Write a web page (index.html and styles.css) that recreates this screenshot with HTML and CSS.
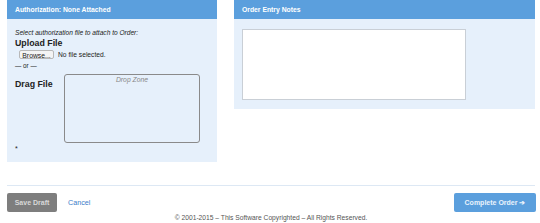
FILE: index.html
```html
<!DOCTYPE html>
<html lang="en">
<head>
    <meta charset="UTF-8">
    <meta name="viewport" content="width=device-width, initial-scale=1.0">
    <title>Order Entry</title>
    <link rel="stylesheet" href="styles.css">
</head>
<body>
    <div class="order-page">
        <div class="panels">
            <div class="panel panel-auth">
                <div class="panel-header">Authorization: None Attached</div>
                <div class="panel-body">
                    <div class="hint">Select authorization file to attach to Order:</div>
                    <div class="field-title">Upload File</div>
                    <div class="file-row">
                        <span class="browse-btn">Browse...</span>
                        <span class="file-status">No file selected.</span>
                    </div>
                    <div class="or-line">&mdash; or &mdash;</div>
                    <div class="drag-row">
                        <div class="field-title drag-label">Drag File</div>
                        <div class="drop-zone">Drop Zone</div>
                    </div>
                    <div class="required">*</div>
                </div>
            </div>
            <div class="panel panel-notes">
                <div class="panel-header">Order Entry Notes</div>
                <div class="panel-body">
                    <textarea class="notes"></textarea>
                </div>
            </div>
        </div>

        <div class="actions">
            <div class="actions-left">
                <button class="btn btn-draft">Save Draft</button>
                <a class="cancel-link" href="#">Cancel</a>
            </div>
            <button class="btn btn-complete">Complete Order <span class="arrow">&#x2794;</span></button>
        </div>
        <div class="copyright">&copy; 2001-2015 &ndash; This Software Copyrighted &ndash; All Rights Reserved.</div>
    </div>
</body>
</html>
```

FILE: styles.css
```css
body {
    margin: 0;
    background-color: #ffffff;
    font-family: "Liberation Sans", Arial, sans-serif;
    color: #222;
}

.order-page {
    width: 540px;
    height: 223px;
    padding: 0 5px 0 7px;
    box-sizing: border-box;
}

.panels {
    display: flex;
    align-items: flex-start;
    gap: 17px;
    height: 185px;
    border-bottom: 1px solid #dde8f4;
}

.panel {
    background-color: #e6f0fb;
}

.panel-auth {
    width: 210px;
    height: 162px;
}

.panel-notes {
    width: 301px;
    height: 109px;
}

.panel-header {
    height: 19px;
    line-height: 19px;
    padding-left: 8px;
    background-color: #5b9fdd;
    color: #ffffff;
    font-size: 6.8px;
    font-weight: bold;
}

.panel-auth .panel-body {
    padding: 10px 8px 0 8px;
}

.hint {
    font-size: 6.6px;
    font-style: italic;
    line-height: 8px;
}

.field-title {
    font-size: 8.8px;
    font-weight: bold;
    line-height: 11px;
    margin-top: 1px;
}

.file-row {
    display: flex;
    align-items: center;
    margin-left: 4px;
    height: 10px;
}

.browse-btn {
    display: inline-block;
    width: 35px;
    height: 9px;
    line-height: 9px;
    box-sizing: border-box;
    border: 1px solid #b8b8b8;
    border-radius: 2px;
    background-color: #f4f4f4;
    font-size: 6.8px;
    text-align: center;
}

.file-status {
    margin-left: 4px;
    font-size: 6.7px;
}

.or-line {
    font-size: 6.3px;
    line-height: 8px;
    margin-top: 3px;
}

.drag-row {
    display: flex;
    align-items: flex-start;
    margin-top: 4px;
}

.drag-label {
    width: 49px;
    margin-top: 5px;
}

.drop-zone {
    width: 136px;
    height: 69px;
    box-sizing: border-box;
    border: 1px solid #8a8a8a;
    border-radius: 3px;
    padding-top: 1px;
    text-align: center;
    font-size: 6.8px;
    font-style: italic;
    color: #888;
}

.required {
    font-size: 7px;
    margin-top: 2px;
}

.panel-notes .panel-body {
    padding: 10px 8px 0 8px;
}

.notes {
    display: block;
    width: 224px;
    height: 71px;
    box-sizing: border-box;
    margin: 0;
    border: 1px solid #c9cfd6;
    background-color: #ffffff;
    resize: none;
}

.actions {
    display: flex;
    justify-content: space-between;
    align-items: center;
    margin-top: 7px;
}

.actions-left {
    display: flex;
    align-items: center;
}

.btn {
    height: 19px;
    border: none;
    border-radius: 2px;
    font-family: "Liberation Sans", Arial, sans-serif;
    font-size: 7px;
    font-weight: bold;
    padding: 0;
}

.btn-draft {
    width: 50px;
    background-color: #7e7e7e;
    color: #d8d8d8;
}

.cancel-link {
    margin-left: 11px;
    font-size: 7.2px;
    color: #3b7cc9;
    text-decoration: none;
}

.btn-complete {
    width: 82px;
    margin-right: -1px;
    background-color: #5b9fdd;
    color: #eaf3fc;
}

.arrow {
    font-size: 7px;
}

.copyright {
    margin-top: 2px;
    text-align: center;
    font-size: 6.7px;
    color: #555;
}
```
